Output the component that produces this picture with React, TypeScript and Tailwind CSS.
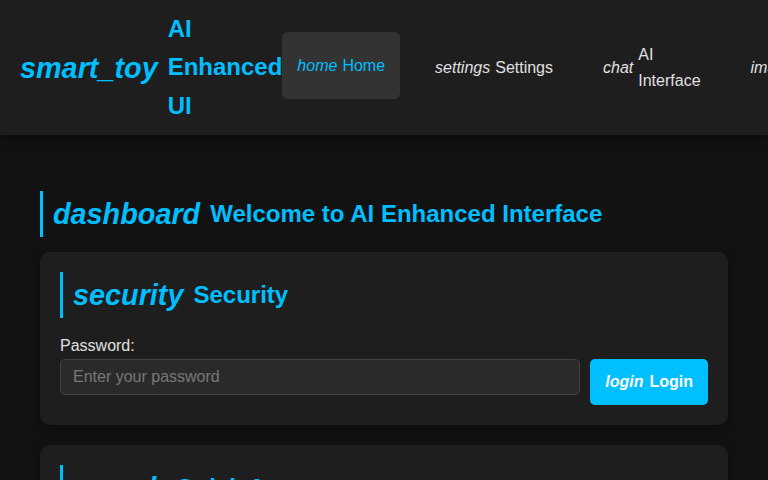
import { useState } from "react";

const NAV_ITEMS = [
  { icon: "home", label: "Home" },
  { icon: "settings", label: "Settings" },
  { icon: "chat", label: "AI Interface" },
  { icon: "image", label: "Image Studio" },
  { icon: "analytics", label: "Analytics" },
];

function SectionTitle({ icon, title, as = "h2" }: { icon: string; title: string; as?: "h1" | "h2" }) {
  const Tag = as;
  return (
    <Tag className="flex items-center border-l-[3px] border-[#00bfff] pl-[10px] text-[24px] font-bold text-[#00bfff]">
      <i className="mr-[10px] text-[28.8px]">{icon}</i>
      <span>{title}</span>
    </Tag>
  );
}

export default function App() {
  const [active, setActive] = useState("Home");
  const [password, setPassword] = useState("");

  return (
    <div
      className="min-h-screen w-full overflow-hidden bg-[#121212] text-[16px] leading-[1.6] text-[#e0e0e0]"
      style={{ fontFamily: '"Liberation Sans", Arial, sans-serif' }}
    >
      <header className="flex items-center justify-between bg-[#1e1e1e] px-5 py-[10px] shadow-[0_2px_10px_rgba(0,0,0,0.5)]">
        <div className="flex items-center text-[24px] font-bold text-[#00bfff]">
          <i className="mr-[10px] text-[28.8px]">smart_toy</i>
          <span>AI Enhanced UI</span>
        </div>
        <nav className="flex gap-5">
          {NAV_ITEMS.map((item) => {
            const isActive = item.label === active;
            return (
              <a
                key={item.label}
                href="#"
                onClick={(event) => {
                  event.preventDefault();
                  setActive(item.label);
                }}
                className={
                  isActive
                    ? "flex -translate-y-[2px] items-center rounded-[6px] bg-[#333333] px-[15px] py-2 text-[#00bfff]"
                    : "flex items-center rounded-[6px] px-[15px] py-2 text-[#e0e0e0]"
                }
              >
                <i className="mr-[5px]">{item.icon}</i>
                <span>{item.label}</span>
              </a>
            );
          })}
        </nav>
      </header>

      <main className="px-10 pt-[56px]">
        <SectionTitle as="h1" icon="dashboard" title="Welcome to AI Enhanced Interface" />

        <section className="mt-[15px] rounded-[10px] bg-[#1e1e1e] p-5 shadow-[0_4px_12px_rgba(0,0,0,0.35)]">
          <SectionTitle icon="security" title="Security" />
          <div className="mt-[15px] flex items-end gap-[10px]">
            <div className="flex-1">
              <label htmlFor="password" className="block">
                Password:
              </label>
              <input
                id="password"
                type="password"
                value={password}
                onChange={(event) => setPassword(event.target.value)}
                placeholder="Enter your password"
                className="mb-[10px] h-[36px] w-full rounded-[5px] border border-[#444444] bg-[#2a2a2a] px-3 text-[16px] text-[#e0e0e0] placeholder:text-[#777777] focus:outline-none"
              />
            </div>
            <button className="flex items-center rounded-[5px] bg-[#00bfff] px-[15px] py-[10px] font-bold text-white">
              <i className="mr-[6px]">login</i>
              <span>Login</span>
            </button>
          </div>
        </section>

        <section className="mt-5 rounded-[10px] bg-[#1e1e1e] p-5 shadow-[0_4px_12px_rgba(0,0,0,0.35)]">
          <SectionTitle icon="search" title="Quick Access" />
          <div className="mt-[15px] flex flex-wrap gap-[10px]">
            <button className="rounded-[5px] bg-[#00bfff] px-[15px] py-[10px] font-bold text-white">New Chat</button>
            <button className="rounded-[5px] bg-[#00bfff] px-[15px] py-[10px] font-bold text-white">Generate Image</button>
          </div>
        </section>
      </main>
    </div>
  );
}
